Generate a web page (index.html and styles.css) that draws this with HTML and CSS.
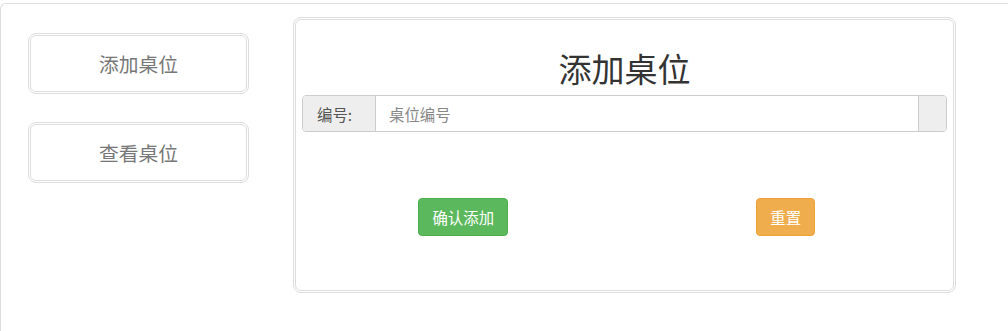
FILE: index.html
```html
<!DOCTYPE html>
<html lang="zh-CN">
<head>
    <meta charset="UTF-8" />
    <title>添加桌位</title>
    <link rel="stylesheet" href="styles.css">
</head>
<body>
    <div class="frame">
        <div class="side">
            <a class="side-btn" href="#">添加桌位</a>
            <a class="side-btn" href="#">查看桌位</a>
        </div>
        <div class="panel">
            <h2 class="title">添加桌位</h2>
            <div class="input-group">
                <span class="addon">编号:</span>
                <input type="text" class="field" placeholder="桌位编号" />
                <span class="addon addon-end"></span>
            </div>
            <div class="actions">
                <div class="col"><button class="btn btn-green">确认添加</button></div>
                <div class="col"><button class="btn btn-orange">重置</button></div>
            </div>
        </div>
    </div>
</body>
</html>
```

FILE: styles.css
```css
* {
    box-sizing: border-box;
}
body {
    margin: 0;
    padding-top: 3px;
    font-family: "Noto Sans CJK SC", "Liberation Sans", sans-serif;
    font-size: 15.4px;
    color: #333;
    background: #fff;
}
.frame {
    display: flex;
    align-items: flex-start;
    min-height: 340px;
    padding: 13px 0 0 27px;
    border-top: 1px solid #ddd;
    border-left: 1px solid #ddd;
    border-top-left-radius: 6px;
}
.side {
    display: flex;
    flex-direction: column;
    gap: 28px;
    width: 221px;
    padding-top: 16px;
    margin-right: 44px;
}
.side-btn {
    display: flex;
    justify-content: center;
    align-items: center;
    height: 61px;
    border: 3px double #ddd;
    border-radius: 8px;
    color: #777;
    font-size: 19.8px;
    text-decoration: none;
}
.panel {
    width: 663px;
    height: 276px;
    border: 3px double #ddd;
    border-radius: 8px;
    padding: 0 6px;
}
.title {
    margin: 30px 0 9px;
    font-size: 33px;
    font-weight: normal;
    line-height: 36px;
    text-align: center;
    color: #333;
}
.input-group {
    display: flex;
    height: 37px;
    border: 1px solid #ccc;
    border-radius: 4px;
    overflow: hidden;
}
.addon {
    display: flex;
    align-items: center;
    width: 73px;
    padding-left: 14px;
    background: #eee;
    color: #555;
    font-size: 15.4px;
    border-right: 1px solid #ccc;
}
.addon-end {
    width: 28px;
    padding: 0;
    border-right: none;
    border-left: 1px solid #ccc;
}
.field {
    flex: 1;
    border: none;
    padding: 0 13px;
    font-family: inherit;
    font-size: 15.4px;
    color: #555;
    outline: none;
}
.field::placeholder {
    color: #888;
}
.actions {
    display: flex;
    margin-top: 66px;
}
.col {
    flex: 1;
    display: flex;
    justify-content: center;
}
.btn {
    height: 38px;
    padding: 0 13px;
    border: 1px solid transparent;
    border-radius: 4px;
    color: #fff;
    font-family: inherit;
    font-size: 15.4px;
    cursor: pointer;
}
.btn-green {
    background-color: #5cb85c;
    border-color: #4cae4c;
}
.btn-orange {
    background-color: #f0ad4e;
    border-color: #eea236;
}
```
